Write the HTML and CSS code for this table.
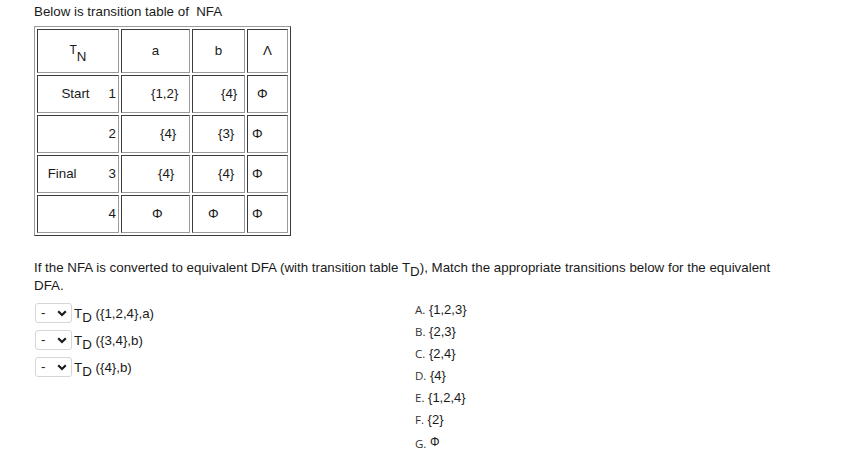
FILE: index.html
```html
<!DOCTYPE html>
<html>
<head>
<meta charset="utf-8">
<link rel="stylesheet" href="styles.css">
</head>
<body>
<div class="page">
  <div class="title">Below is transition table of&nbsp; NFA</div>
  <table class="nfa">
    <colgroup><col class="c1"><col class="c2"><col class="c3"><col class="c4"></colgroup>
    <tr class="head">
      <td class="ctr"><span class="tsm">T</span><span class="sub">N</span></td>
      <td class="ctr">a</td>
      <td class="ctr">b</td>
      <td class="ctr">Λ</td>
    </tr>
    <tr class="row">
      <td class="st"><span class="lbl-start">Start</span>1</td>
      <td class="p29">{1,2}</td>
      <td class="p28">{4}</td>
      <td class="p9">Φ</td>
    </tr>
    <tr class="row">
      <td class="st">2</td>
      <td class="p38">{4}</td>
      <td class="p25">{3}</td>
      <td class="p4">Φ</td>
    </tr>
    <tr class="row">
      <td class="st"><span class="lbl-final">Final</span>3</td>
      <td class="p36">{4}</td>
      <td class="p25">{4}</td>
      <td class="p4">Φ</td>
    </tr>
    <tr class="row">
      <td class="st">4</td>
      <td class="p30">Φ</td>
      <td class="p15">Φ</td>
      <td class="p4">Φ</td>
    </tr>
  </table>
  <p class="question">If the NFA is converted to equivalent DFA (with transition table T<span class="sub">D</span>), Match the appropriate transitions below for the equivalent DFA.</p>
  <div class="match">
    <div class="left">
      <div class="item">
        <div class="select"><span class="dash">-</span><svg class="chev" width="10" height="7" viewBox="0 0 10 7"><path d="M1.2 1.3 L5 5 L8.8 1.3" fill="none" stroke="#1a1a1a" stroke-width="2.2"/></svg></div>
        <span class="prompt">T<span class="sub">D</span> ({1,2,4},a)</span>
      </div>
      <div class="item">
        <div class="select"><span class="dash">-</span><svg class="chev" width="10" height="7" viewBox="0 0 10 7"><path d="M1.2 1.3 L5 5 L8.8 1.3" fill="none" stroke="#1a1a1a" stroke-width="2.2"/></svg></div>
        <span class="prompt">T<span class="sub">D</span> ({3,4},b)</span>
      </div>
      <div class="item">
        <div class="select"><span class="dash">-</span><svg class="chev" width="10" height="7" viewBox="0 0 10 7"><path d="M1.2 1.3 L5 5 L8.8 1.3" fill="none" stroke="#1a1a1a" stroke-width="2.2"/></svg></div>
        <span class="prompt">T<span class="sub">D</span> ({4},b)</span>
      </div>
    </div>
    <ul class="answers">
      <li><span class="let">A.</span> {1,2,3}</li>
      <li><span class="let">B.</span> {2,3}</li>
      <li><span class="let">C.</span> {2,4}</li>
      <li><span class="let">D.</span> {4}</li>
      <li><span class="let">E.</span> {1,2,4}</li>
      <li><span class="let">F.</span> {2}</li>
      <li><span class="let">G.</span> <span class="phi-up">Φ</span></li>
    </ul>
  </div>
</div>
</body>
</html>
```

FILE: styles.css
```css
html, body {
  margin: 0;
  padding: 0;
  background: #fff;
}
.page {
  padding: 3px 0 0 34px;
  font-family: "Liberation Sans", Arial, sans-serif;
  font-size: 13.33px;
  line-height: 18px;
  color: #1a1a1a;
}
.title {
  height: 18px;
}
.nfa {
  margin-top: 5px;
  border-collapse: separate;
  border-spacing: 2px;
  border: 1px solid;
  border-color: #9a9a9a #3c3c3c #3c3c3c #9a9a9a;
  table-layout: fixed;
  width: 257px;
}
.c1 { width: 82px; }
.c2 { width: 69px; }
.c3 { width: 53px; }
.c4 { width: 41px; }
.nfa td {
  border: 1px solid;
  border-color: #3c3c3c #9a9a9a #9a9a9a #3c3c3c;
  padding: 0;
  vertical-align: middle;
  white-space: nowrap;
}
.head { height: 44px; }
.row { height: 38px; }
.ctr { text-align: center; }
.tsm { font-size: 12px; vertical-align: 3px; }
.sub { vertical-align: -4px; line-height: 0; }
.st { text-align: right; padding-right: 2px !important; }
.lbl-start { margin-right: 19px; }
.lbl-final { margin-right: 32px; }
.p4 { padding-left: 4px !important; }
.p9 { padding-left: 9px !important; }
.p15 { padding-left: 15px !important; }
.p25 { padding-left: 25px !important; }
.p28 { padding-left: 28px !important; }
.p29 { padding-left: 29px !important; }
.p30 { padding-left: 30px !important; }
.p36 { padding-left: 36px !important; }
.p38 { padding-left: 38px !important; }
.question {
  margin: 23px 0 0 0;
  width: 760px;
}
.match {
  display: flex;
  margin-top: 8px;
}
.left {
  width: 381px;
  display: flex;
  flex-direction: column;
  gap: 7px;
  padding-left: 1px;
  box-sizing: border-box;
}
.item {
  display: flex;
  align-items: flex-start;
  height: 20px;
}
.select {
  width: 35px;
  height: 18px;
  border: 1px solid #d6d6d6;
  border-radius: 3px;
  display: flex;
  align-items: center;
  box-sizing: content-box;
}
.dash {
  margin-left: 5px;
  width: 16px;
  line-height: 18px;
}
.chev { display: block; }
.prompt {
  margin-left: 2px;
  padding-top: 2px;
  line-height: 18px;
}
.answers {
  list-style: none;
  margin: -4px 0 0 0;
  padding: 0;
  font-size: 13px;
  line-height: 22px;
}
.answers li { height: 22px; }
.let {
  font-family: "Open Sans", "Noto Sans", sans-serif;
  font-size: 11.5px;
  color: #333;
}
.phi-up { vertical-align: 2px; font-size: 12px; }
```
